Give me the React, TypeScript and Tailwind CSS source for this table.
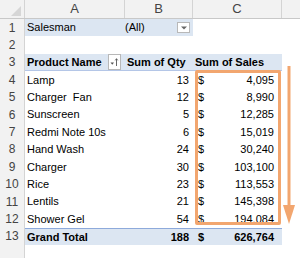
import React from 'react';

type Row = { name: string; qty: number; sales: string };

const rows: Row[] = [
  { name: 'Lamp', qty: 13, sales: '4,095' },
  { name: 'Charger  Fan', qty: 12, sales: '8,990' },
  { name: 'Sunscreen', qty: 5, sales: '12,285' },
  { name: 'Redmi Note 10s', qty: 6, sales: '15,019' },
  { name: 'Hand Wash', qty: 24, sales: '30,240' },
  { name: 'Charger', qty: 30, sales: '103,100' },
  { name: 'Rice', qty: 23, sales: '113,553' },
  { name: 'Lentils', qty: 21, sales: '145,398' },
  { name: 'Shower Gel', qty: 54, sales: '194,084' },
];

function RowNum({ n }: { n?: number }) {
  return (
    <div className="flex w-[25px] shrink-0 items-center justify-center border-r border-[#d4d4d4] bg-[#f2f2f2] text-[12px] text-[#444]">
      {n}
    </div>
  );
}

function SortButton() {
  return (
    <div className="flex h-[16px] w-[13px] items-center justify-center border border-[#b8b8b8] bg-white">
      <svg width="9" height="10" viewBox="0 0 9 10">
        <path d="M0.5 5.5 L4 5.5 L2.25 7.8 Z" fill="#555" />
        <path d="M6.5 9 L6.5 2" stroke="#555" strokeWidth="0.9" />
        <path d="M5.2 3.4 L6.5 1.6 L7.8 3.4" stroke="#555" strokeWidth="0.8" fill="none" />
      </svg>
    </div>
  );
}

function DropButton() {
  return (
    <div className="flex h-[11px] w-[13px] items-center justify-center border border-[#b8b8b8] bg-white">
      <svg width="6" height="4" viewBox="0 0 6 4">
        <path d="M0 0.5 L6 0.5 L3 3.5 Z" fill="#666" />
      </svg>
    </div>
  );
}

export default function App() {
  return (
    <div
      className="relative h-[258px] w-[300px] overflow-hidden bg-white text-[11px] text-black"
      style={{ fontFamily: '"Liberation Sans", Arial, sans-serif' }}
    >
      {/* column headers */}
      <div className="flex h-[19px] border-b border-[#c8c8c8] bg-[#f2f2f2] text-[13px] text-[#444]">
        <div className="relative w-[25px] shrink-0 border-r border-[#d4d4d4]">
          <svg className="absolute bottom-[2px] right-[3px]" width="10" height="10" viewBox="0 0 10 10">
            <path d="M10 0 L10 10 L0 10 Z" fill="#d6d6d6" />
          </svg>
        </div>
        <div className="flex w-[100px] shrink-0 items-center justify-center border-r border-[#d4d4d4]">A</div>
        <div className="flex w-[68px] shrink-0 items-center justify-center border-r border-[#d4d4d4]">B</div>
        <div className="flex w-[89px] shrink-0 items-center justify-center border-r border-[#d4d4d4]">C</div>
        <div className="flex-1" />
      </div>

      {/* row 1 */}
      <div className="flex h-[17.4px]">
        <RowNum n={1} />
        <div className="flex w-[168px] shrink-0 items-center bg-[#dce6f2]">
          <div className="w-[100px] pl-[2px]">Salesman</div>
          <div className="flex flex-1 items-center justify-between pr-[3px]">
            <span>(All)</span>
            <DropButton />
          </div>
        </div>
      </div>

      {/* row 2 */}
      <div className="flex h-[17.4px]">
        <RowNum n={2} />
      </div>

      {/* row 3 header */}
      <div className="flex h-[17.4px]">
        <RowNum n={3} />
        <div className="flex w-[257px] shrink-0 items-center border-b border-[#b4c6e7] bg-[#dce6f2] font-bold">
          <div className="flex w-[100px] items-center justify-between pl-[2px] pr-[4px]">
            <span>Product Name</span>
            <SortButton />
          </div>
          <div className="w-[68px] pl-[2px]">Sum of Qty</div>
          <div className="flex-1 pl-[2px]">Sum of Sales</div>
        </div>
      </div>

      {/* data rows */}
      {rows.map((r, i) => (
        <div key={r.name} className="flex h-[17.4px]">
          <RowNum n={i + 4} />
          <div className="flex w-[257px] shrink-0 items-center">
            <div className="w-[100px] whitespace-pre pl-[2px]">{r.name}</div>
            <div className="w-[68px] pr-[4px] text-right">{r.qty}</div>
            <div className="flex flex-1 justify-between pl-[5px] pr-[8px]">
              <span>$</span>
              <span>{r.sales}</span>
            </div>
          </div>
        </div>
      ))}

      {/* grand total */}
      <div className="flex h-[17.4px]">
        <RowNum n={13} />
        <div className="flex w-[257px] shrink-0 items-center border-t border-[#8eaadb] bg-[#dce6f2] font-bold">
          <div className="w-[100px] pl-[2px]">Grand Total</div>
          <div className="w-[68px] pr-[4px] text-right">188</div>
          <div className="flex flex-1 justify-between pl-[5px] pr-[8px]">
            <span>$</span>
            <span>626,764</span>
          </div>
        </div>
      </div>

      {/* row 14 (cut off) */}
      <div className="flex h-[17.4px]">
        <RowNum />
      </div>

      {/* highlight box */}
      <div className="absolute left-[195px] top-[70px] h-[155px] w-[86px] rounded-[2px] border-[3px] border-[#f2a66f]" />

      {/* arrow */}
      <svg className="absolute left-[282px] top-[66px]" width="16" height="160" viewBox="0 0 16 160">
        <path d="M7 0 L7 142" stroke="#f2a66f" strokeWidth="3" />
        <path d="M1 139 L13 139 L7 158 Z" fill="#f2a66f" />
      </svg>
    </div>
  );
}
